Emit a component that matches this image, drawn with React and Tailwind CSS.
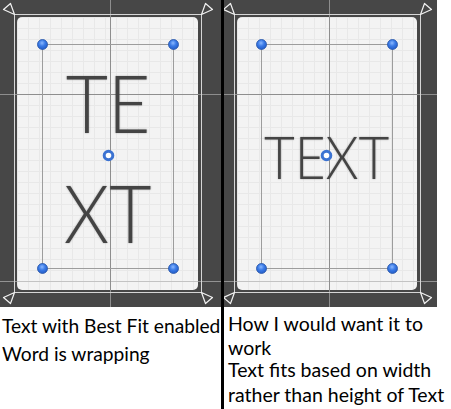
import React from 'react';

// Unity-style rect gizmo drawn over the canvas: guides, outer frame, anchor triangles, inner rect.
function Guides({ w, frameL, frameR, vline, rectL, rectR }) {
  const tri = (x, y, sx, sy) =>
    `${x},${y} ${x + sx * 11},${y + sy * 5} ${x + sx * 4},${y + sy * 11}`;
  return (
    <svg className="absolute inset-0" width={w} height={307}>
      {/* scene guides */}
      <line x1="0" y1="94.5" x2={w} y2="94.5" stroke="#8e8e8e" strokeWidth="1" />
      <line x1="0" y1="281.5" x2={w} y2="281.5" stroke="#b4b4b4" strokeOpacity="0.7" strokeWidth="1" />
      <line x1={vline + 0.5} y1="0" x2={vline + 0.5} y2="307" stroke="#8e8e8e" strokeWidth="1" />
      {/* parent frame */}
      <rect x={frameL + 0.5} y="14.5" width={frameR - frameL} height="278" fill="none" stroke="#d6d6d6" strokeWidth="1" />
      {/* anchors */}
      <g fill="none" stroke="#f2f2f2" strokeWidth="1.2" strokeLinejoin="round">
        <polygon points={tri(frameL + 0.5, 14.5, -1, -1)} />
        <polygon points={tri(frameR + 0.5, 14.5, 1, -1)} />
        <polygon points={tri(frameL + 0.5, 292.5, -1, 1)} />
        <polygon points={tri(frameR + 0.5, 292.5, 1, 1)} />
      </g>
      {/* rect bounds */}
      <rect x={rectL + 0.5} y="44.5" width={rectR - rectL} height="224" fill="none" stroke="#9c9c9c" strokeWidth="1" />
    </svg>
  );
}

function Handles({ w, rectL, rectR, ringX, id }) {
  const dot = (x, y) => (
    <circle key={`${x}-${y}`} cx={x} cy={y} r="5" fill={`url(#${id})`} stroke="#2553a6" strokeWidth="0.8" />
  );
  return (
    <svg className="absolute inset-0" width={w} height={307}>
      <defs>
        <radialGradient id={id} cx="0.45" cy="0.35" r="0.7">
          <stop offset="0" stopColor="#8ab8ff" />
          <stop offset="0.45" stopColor="#3a7ae6" />
          <stop offset="1" stopColor="#1f58c4" />
        </radialGradient>
      </defs>
      {dot(rectL + 0.5, 44.5)}
      {dot(rectR + 0.5, 44.5)}
      {dot(rectL + 0.5, 268.5)}
      {dot(rectR + 0.5, 268.5)}
      {/* pivot */}
      <circle cx={ringX} cy="155.5" r="4.3" fill="#ffffff" stroke="#3c73d2" strokeWidth="3" />
    </svg>
  );
}

function Panel({ w, widthClass, cardClass, textBoxClass, frameL, frameR, vline, rectL, rectR, ringX, id, children }) {
  return (
    <div className={`relative h-[307px] bg-[#474747] overflow-hidden ${widthClass}`}>
      <div
        className={`absolute top-[17px] h-[273px] rounded-[5px] bg-[#f3f3f3] bg-[linear-gradient(to_right,#e8e8e8_1px,transparent_1px),linear-gradient(to_bottom,#e8e8e8_1px,transparent_1px)] bg-[length:11px_11px] ${cardClass}`}
      />
      <Guides w={w} frameL={frameL} frameR={frameR} vline={vline} rectL={rectL} rectR={rectR} />
      <div className={`absolute top-[44px] h-[224px] flex flex-col items-center justify-center ${textBoxClass}`}>
        {children}
      </div>
      <Handles w={w} rectL={rectL} rectR={rectR} ringX={ringX} id={id} />
    </div>
  );
}

const canvasText =
  "font-['Lato',sans-serif] font-light text-[#444444] leading-none scale-x-[0.9] [text-shadow:0_0_2px_rgba(0,0,0,0.35)]";

export default function App() {
  return (
    <div className="flex w-[451px] h-[409px] bg-white overflow-hidden font-['Lato','Open_Sans',sans-serif] text-black">
      <div className="w-[221px] shrink-0 flex flex-col">
        <Panel
          w={221}
          widthClass="w-[221px]"
          cardClass="left-[17px] w-[181px]"
          textBoxClass="left-[42px] w-[131px]"
          frameL={14}
          frameR={201}
          vline={110}
          rectL={42}
          rectR={173}
          ringX={108.5}
          id="dotLeft"
        >
          <div className={`${canvasText} text-[81px] h-[110px] flex items-center`}>TE</div>
          <div className={`${canvasText} text-[81px] h-[110px] flex items-center`}>XT</div>
        </Panel>
        <div className="pl-[2px] pt-[5px] text-[19.2px] leading-[28px] whitespace-nowrap">
          <div>Text with Best Fit enabled</div>
          <div>Word is wrapping</div>
        </div>
      </div>

      <div className="w-[3px] shrink-0 bg-black" />

      <div className="flex-1 flex flex-col">
        <Panel
          w={213}
          widthClass="w-[213px]"
          cardClass="left-[13px] w-[180px]"
          textBoxClass="left-[37px] w-[131px]"
          frameL={10}
          frameR={196}
          vline={105}
          rectL={37}
          rectR={168}
          ringX={102.5}
          id="dotRight"
        >
          <div className={`${canvasText} text-[59px]`}>TEXT</div>
        </Panel>
        <div className="pl-[4px] pt-[5px] text-[19.5px] whitespace-nowrap">
          <div className="leading-[24px]">How I would want it to</div>
          <div className="leading-[24px]">work</div>
          <div className="leading-[24px] -mt-[2px]">Text fits based on width</div>
          <div className="leading-[24px] mt-[1px]">rather than height of Text</div>
        </div>
      </div>
    </div>
  );
}
